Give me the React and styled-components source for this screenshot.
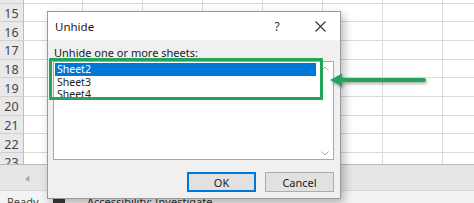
import React from "react";
import styled, { createGlobalStyle } from "styled-components";

const Global = createGlobalStyle`
  html, body { margin: 0; padding: 0; background: #ffffff; }
  body { width: 474px; height: 203px; overflow: hidden; font-family: "Noto Sans", "Open Sans", sans-serif; }
  #root { position: relative; width: 474px; height: 203px; overflow: hidden; }
`;

const UI_FONT = `"Noto Sans", "Open Sans", sans-serif`;

const Page = styled.div`
  position: relative;
  width: 474px;
  height: 203px;
  display: flex;
  flex-direction: column;
  background: #ffffff;
`;

const Sheet = styled.div`
  height: 164px;
  overflow: hidden;
  display: flex;
  flex-direction: column;
  flex: none;
`;

const Row = styled.div`
  display: flex;
  flex: none;
  height: ${(p) => p.$h}px;
  border-bottom: 1px solid #dadada;
  box-sizing: border-box;
`;

const RowHeader = styled.div`
  width: 24px;
  flex: none;
  background: #e9e9e9;
  border-right: 1px solid #bdbdbd;
  border-bottom: 1px solid #d0d0d0;
  margin-bottom: -1px;
  box-sizing: border-box;
  display: flex;
  align-items: center;
  justify-content: center;
  font-family: "Noto Sans", sans-serif;
  font-size: 12.5px;
  color: #444444;
  padding-top: 2px;
`;

const Cell = styled.div`
  width: ${(p) => p.$w}px;
  flex: none;
  border-right: 1px solid #dadada;
  box-sizing: border-box;
`;

const TabBar = styled.div`
  height: 26px;
  flex: none;
  background: #e6e6e6;
  border-top: 1px solid #b9b9b9;
  box-sizing: border-box;
  display: flex;
  align-items: center;
  padding-left: 24px;
`;

const ScrollArrow = styled.span`
  font-size: 8px;
  color: #a8a8a8;
  transform: scaleX(0.7);
`;

const StatusBar = styled.div`
  flex: 1;
  background: #f3f3f3;
  border-top: 1px solid #d6d6d6;
  display: flex;
  align-items: flex-start;
  padding-left: 7px;
  font-family: ${UI_FONT};
  font-size: 11px;
  color: #444444;
  line-height: 1;
  padding-top: 5px;
  box-sizing: border-box;
`;

const StatusText = styled.span`
  width: ${(p) => p.$w || "auto"};
  color: ${(p) => p.$c || "#444444"};
  flex: none;
`;

const StatusIcon = styled.span`
  width: 12px;
  height: 10px;
  background: #3a3a3a;
  margin: 2px 22px 0 11px;
  flex: none;
`;

const Dialog = styled.div`
  position: absolute;
  left: 47px;
  top: 11px;
  width: 294px;
  height: 188px;
  box-sizing: border-box;
  border: 1px solid #9a9a9a;
  background: #f0f0f0;
  box-shadow: 3px 4px 9px rgba(0, 0, 0, 0.28);
  display: flex;
  flex-direction: column;
  font-family: ${UI_FONT};
  color: #1a1a1a;
`;

const TitleBar = styled.div`
  height: 28px;
  flex: none;
  background: #ffffff;
  display: flex;
  align-items: center;
  padding-left: 7px;
  font-size: 11.5px;
`;

const Title = styled.span`
  flex: 1;
  margin-top: 1px;
`;

const TitleButton = styled.span`
  width: ${(p) => p.$w}px;
  display: flex;
  justify-content: center;
  align-items: center;
  font-size: 12px;
  color: #333333;
`;

const Body = styled.div`
  flex: 1;
  display: flex;
  flex-direction: column;
  padding: 5px 6px 6px 5px;
`;

const Label = styled.div`
  font-size: 11px;
  height: 16px;
  line-height: 16px;
  padding-left: 1px;
`;

const Under = styled.span`
  text-decoration: underline;
`;

const ListBox = styled.div`
  height: 99px;
  box-sizing: border-box;
  border: 1px solid #a8a8a8;
  background: #ffffff;
  display: flex;
  flex: none;
`;

const Items = styled.div`
  flex: 1;
  padding: 1px 0 0 1px;
  display: flex;
  flex-direction: column;
`;

const Item = styled.div`
  height: 12.6px;
  line-height: 12.6px;
  font-size: 10.5px;
  padding-left: 2px;
  background: ${(p) => (p.$sel ? "#0078d7" : "transparent")};
  color: ${(p) => (p.$sel ? "#ffffff" : "#1a1a1a")};
`;

const ScrollBar = styled.div`
  width: 17px;
  flex: none;
  display: flex;
  flex-direction: column;
  justify-content: space-between;
  align-items: center;
  padding: 4px 0 3px;
`;

const Buttons = styled.div`
  margin-top: auto;
  display: flex;
  justify-content: flex-end;
  gap: 9px;
`;

const Button = styled.button`
  width: 69px;
  height: 20px;
  box-sizing: border-box;
  background: #e1e1e1;
  border: ${(p) => (p.$default ? "2px solid #0078d7" : "1px solid #adadad")};
  font-family: ${UI_FONT};
  font-size: 11px;
  color: #1a1a1a;
  padding: 0;
  display: flex;
  align-items: center;
  justify-content: center;
`;

const Highlight = styled.div`
  position: absolute;
  left: 49px;
  top: 58px;
  width: 274px;
  height: 42px;
  box-sizing: border-box;
  border: 3px solid #23a45b;
  border-radius: 1px;
`;

const Arrow = styled.svg`
  position: absolute;
  left: 326px;
  top: 70px;
  filter: drop-shadow(1px 2px 1.5px rgba(0, 0, 0, 0.3));
`;

const Chevron = ({ up }) => (
  <svg width="8" height="5" viewBox="0 0 8 5">
    <path
      d={up ? "M0.5 4.5 L4 1 L7.5 4.5" : "M0.5 0.5 L4 4 L7.5 0.5"}
      fill="none"
      stroke="#a6a6a6"
      strokeWidth="1"
    />
  </svg>
);

const rows = [
  { n: "", h: 3.5 },
  { n: "15", h: 18.7 },
  { n: "16", h: 18.7 },
  { n: "17", h: 18.7 },
  { n: "18", h: 18.7 },
  { n: "19", h: 18.7 },
  { n: "20", h: 18.7 },
  { n: "21", h: 18.7 },
  { n: "22", h: 18.7 },
  { n: "23", h: 18.7 },
];
const cols = [59, 60, 60, 60, 60, 60, 60, 60];

export default function App() {
  return (
    <>
      <Global />
      <Page>
        <Sheet>
          {rows.map((r, i) => (
            <Row key={i} $h={r.h}>
              <RowHeader>{r.n}</RowHeader>
              {cols.map((w, j) => (
                <Cell key={j} $w={w} />
              ))}
            </Row>
          ))}
        </Sheet>
        <TabBar>
          <ScrollArrow>◀</ScrollArrow>
        </TabBar>
        <StatusBar>
          <StatusText $w="35px">Ready</StatusText>
          <StatusIcon />
          <StatusText $c="#2a2a2a">Accessibility: Investigate</StatusText>
        </StatusBar>

        <Dialog>
          <TitleBar>
            <Title>Unhide</Title>
            <TitleButton $w={46}>?</TitleButton>
            <TitleButton $w={40}>
              <svg width="11" height="11" viewBox="0 0 11 11">
                <path d="M0.5 0.5 L10.5 10.5 M10.5 0.5 L0.5 10.5" stroke="#333" strokeWidth="1.1" />
              </svg>
            </TitleButton>
          </TitleBar>
          <Body>
            <Label>
              <Under>U</Under>nhide one or more sheets:
            </Label>
            <ListBox>
              <Items>
                <Item $sel>Sheet2</Item>
                <Item>Sheet3</Item>
                <Item>Sheet4</Item>
              </Items>
              <ScrollBar>
                <Chevron up />
                <Chevron />
              </ScrollBar>
            </ListBox>
            <Buttons>
              <Button $default>OK</Button>
              <Button>Cancel</Button>
            </Buttons>
          </Body>
        </Dialog>

        <Highlight />
        <Arrow width="102" height="20" viewBox="0 0 102 20">
          <line x1="14" y1="10" x2="98" y2="10" stroke="#23a45b" strokeWidth="4" strokeLinecap="round" />
          <polygon points="4,10 16,3.5 16,16.5" fill="#23a45b" />
        </Arrow>
      </Page>
    </>
  );
}
